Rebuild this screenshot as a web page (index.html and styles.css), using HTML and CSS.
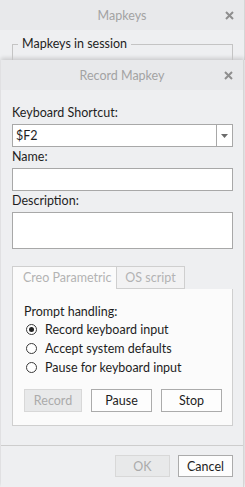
FILE: index.html
```html
<!DOCTYPE html>
<html lang="en">
<head>
  <meta charset="UTF-8">
  <title>Record Mapkey</title>
  <link rel="stylesheet" href="styles.css">
</head>
<body>
  <div class="back-dialog">
    <div class="titlebar">
      <span class="title">Mapkeys</span>
      <svg class="close" width="9" height="9" viewBox="0 0 9 9"><path d="M1 1l7 7M8 1L1 8" stroke="#8e8e8e" stroke-width="2"/></svg>
    </div>
    <div class="back-body">
      <div class="groupbox"><span class="legend">Mapkeys in session</span></div>
    </div>
  </div>

  <div class="dialog">
    <div class="titlebar">
      <span class="title">Record Mapkey</span>
      <svg class="close" width="9" height="9" viewBox="0 0 9 9"><path d="M1 1l7 7M8 1L1 8" stroke="#8e8e8e" stroke-width="2"/></svg>
    </div>
    <div class="content">
      <label class="field-label">Keyboard Shortcut:</label>
      <div class="combo">
        <span class="combo-value">$F2</span>
        <span class="combo-btn"><svg width="7" height="4" viewBox="0 0 7 4"><path d="M0 0h7L3.5 4z" fill="#6b6b6b"/></svg></span>
      </div>
      <label class="field-label">Name:</label>
      <div class="input"></div>
      <label class="field-label">Description:</label>
      <div class="textarea"></div>

      <div class="tabs">
        <div class="tab active">Creo Parametric</div>
        <div class="tab">OS script</div>
      </div>
      <div class="tab-panel">
        <div class="prompt">Prompt handling:</div>
        <div class="radio-row"><span class="radio checked"></span>Record keyboard input</div>
        <div class="radio-row"><span class="radio"></span>Accept system defaults</div>
        <div class="radio-row"><span class="radio"></span>Pause for keyboard input</div>
        <div class="rec-buttons">
          <button class="btn disabled">Record</button>
          <button class="btn">Pause</button>
          <button class="btn">Stop</button>
        </div>
      </div>
    </div>
    <div class="footer">
      <button class="btn small disabled">OK</button>
      <button class="btn small">Cancel</button>
    </div>
  </div>
</body>
</html>
```

FILE: styles.css
```css
body {
  margin: 0;
  padding: 0;
  width: 245px;
  height: 487px;
  overflow: hidden;
  background-color: #eeeff1;
  font-family: Lato, "Noto Sans", sans-serif;
  font-size: 12.5px;
  color: #1e1e1e;
}
.titlebar {
  height: 30px;
  background-color: #e8e9eb;
  display: flex;
  align-items: center;
  justify-content: center;
  position: relative;
}
.title {
  color: #a3a3a3;
}
.close {
  position: absolute;
  right: 10px;
  top: 11px;
}
.back-dialog {
  height: 60px;
  border-right: 1px solid #d6d6d6;
}
.back-body {
  height: 30px;
  padding: 14px 11px 0 12px;
  box-sizing: border-box;
}
.groupbox {
  border: 1px solid #c4c4c4;
  border-bottom: none;
  height: 16px;
  position: relative;
}
.legend {
  position: absolute;
  top: -9px;
  left: 5px;
  padding: 0 4px;
  line-height: 16px;
  background-color: #eeeff1;
  color: #1e1e1e;
}
.dialog {
  margin-left: 1px;
  width: 243px;
  height: 427px;
  background-color: #eeeff1;
  box-shadow: 0 -2px 4px rgba(0,0,0,0.15);
  border-right: 1px solid #d6d6d6;
  box-sizing: border-box;
  display: flex;
  flex-direction: column;
}
.content {
  padding: 14px 10px 0 11px;
  display: flex;
  flex-direction: column;
}
.field-label {
  height: 20px;
  line-height: 18px;
}
.combo {
  height: 23px;
  border: 1px solid #a8a8a8;
  background-color: #fff;
  display: flex;
  align-items: center;
  box-sizing: border-box;
  margin-bottom: 1px;
}
.combo-value {
  flex: 1;
  padding-left: 3px;
}
.combo-btn {
  width: 15px;
  height: 100%;
  border-left: 1px solid #a8a8a8;
  display: flex;
  align-items: center;
  justify-content: center;
}
.input {
  height: 23px;
  border: 1px solid #a8a8a8;
  background-color: #fff;
  box-sizing: border-box;
  margin-bottom: 1px;
}
.textarea {
  height: 37px;
  border: 1px solid #a8a8a8;
  background-color: #fff;
  box-sizing: border-box;
}
.tabs {
  display: flex;
  margin-top: 17px;
}
.tab {
  height: 23px;
  line-height: 22px;
  border: 1px solid #cfcfcf;
  border-bottom: none;
  color: #b3b3b3;
  background-color: #f2f2f3;
  box-sizing: border-box;
  white-space: nowrap;
}
.tab.active {
  background-color: #fbfbfb;
  width: 105px;
  padding-left: 10px;
}
.tab.active + .tab {
  border-left: none;
  border-bottom: 1px solid #cfcfcf;
  width: 68px;
  text-align: center;
}
.tab-panel {
  background-color: #fbfbfb;
  border: 1px solid #cfcfcf;
  border-top: none;
  height: 137px;
  box-sizing: border-box;
  padding: 14px 10px 0 11px;
}
.prompt {
  height: 17px;
  line-height: 17px;
}
.radio-row {
  height: 19px;
  display: flex;
  align-items: center;
  padding-left: 2px;
}
.radio {
  width: 11px;
  height: 11px;
  border: 1px solid #3a3a3a;
  border-radius: 50%;
  box-sizing: border-box;
  margin-right: 8px;
  display: flex;
  align-items: center;
  justify-content: center;
  background-color: #fff;
}
.radio.checked::after {
  content: "";
  width: 5px;
  height: 5px;
  border-radius: 50%;
  background-color: #222;
}
.rec-buttons {
  display: flex;
  gap: 9px;
  margin-top: 12px;
}
.btn {
  font-family: inherit;
  font-size: 12.5px;
  color: #1e1e1e;
  background-color: #fdfdfd;
  border: 1px solid #ababab;
  height: 23px;
  width: 61px;
  padding: 0;
}
.rec-buttons .btn.disabled {
  width: 58px;
}
.btn.disabled {
  background-color: #e8e9ea;
  border-color: #d8d8d8;
  color: #ababab;
}
.footer {
  margin-top: 19px;
  border-top: 1px solid #cdcdcd;
  padding: 9px 10px 0 0;
  display: flex;
  justify-content: flex-end;
  gap: 8px;
}
.btn.small {
  width: 55px;
  height: 22px;
}
```
